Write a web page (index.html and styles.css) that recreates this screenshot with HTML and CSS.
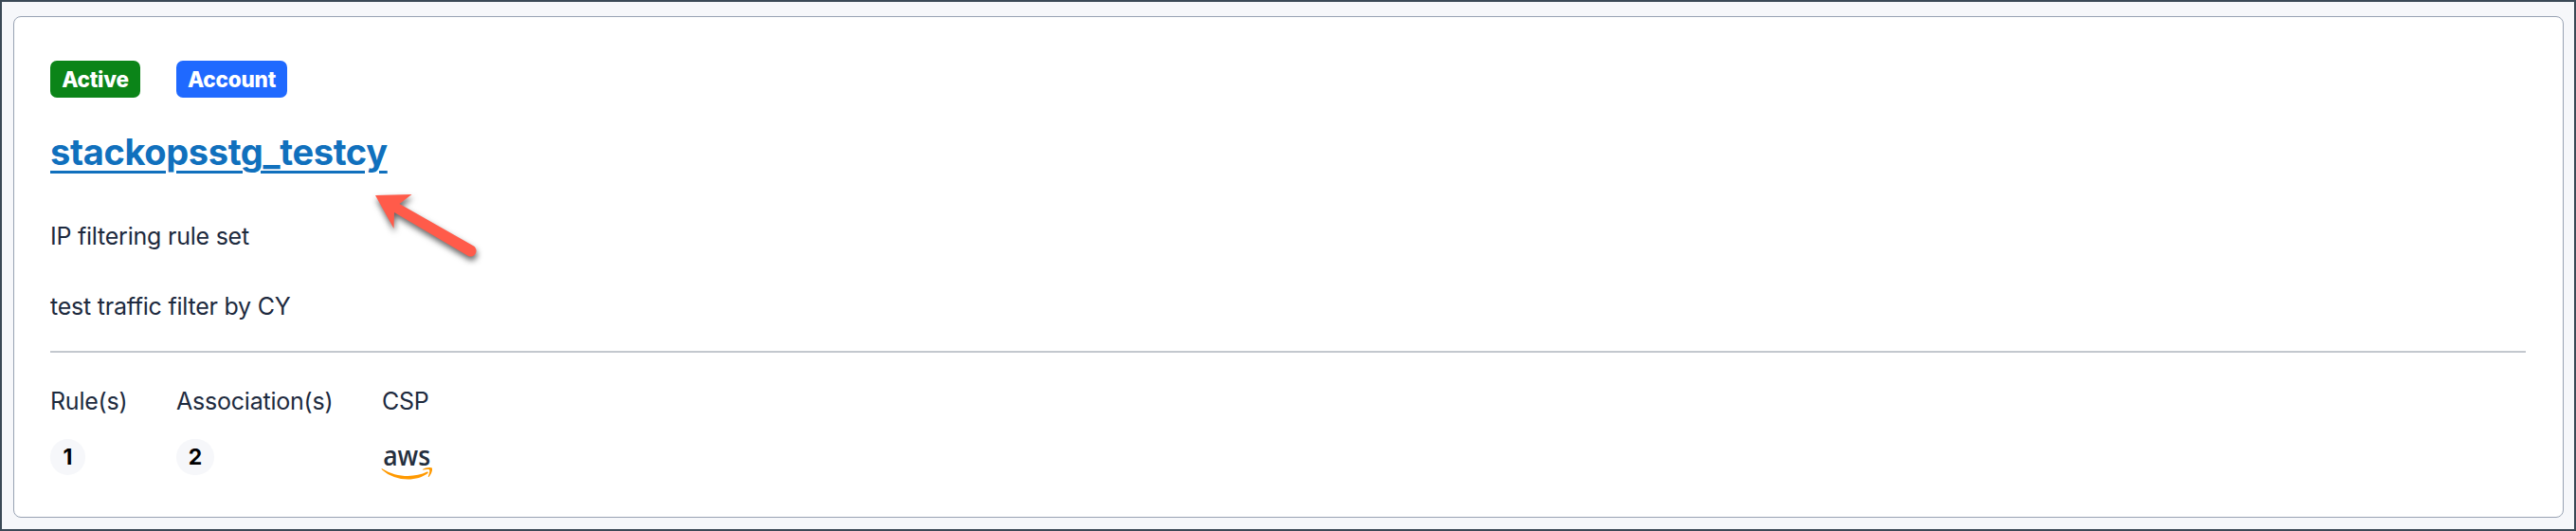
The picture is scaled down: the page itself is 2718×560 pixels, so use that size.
FILE: index.html
```html
<!DOCTYPE html>
<html lang="en">
<head>
<meta charset="utf-8">
<title>Traffic filters</title>
<link rel="stylesheet" href="styles.css">
</head>
<body>
<main class="page">
  <article class="card">
    <div class="badges">
      <span class="badge badge-active"><span class="badge-text">Active</span></span>
      <span class="badge badge-account"><span class="badge-text">Account</span></span>
    </div>
    <h2 class="title"><a class="link" href="#">stackopsstg_testcy</a></h2>
    <p class="text type">IP filtering rule set</p>
    <p class="text note">test traffic filter by CY</p>
    <hr class="rule">
    <div class="stats">
      <div class="stat stat-rules"><span class="label">Rule(s)</span><span class="count count-rules">1</span></div>
      <div class="stat stat-assoc"><span class="label">Association(s)</span><span class="count">2</span></div>
      <div class="stat stat-csp"><span class="label">CSP</span>
        <svg class="aws" viewBox="0 0 54 36" role="img" aria-label="aws">
          <text class="aws-text" x="1.2" y="19.5" textLength="50" lengthAdjust="spacingAndGlyphs">aws</text>
          <path fill="#ff9900" d="M.2 23.2C15 32.6 34 33.2 47.6 26.600c1-.4 1.700.6.9 1.300C36 37.600 13.500 36.500.2 24.400c-.9-.8-.8-1.700 0-1.200z"/>
          <path fill="#ff9900" d="M43 24.100c2-2 8.500-2.800 9.700-1.500 1.100 1.500-.5 6.800-3.200 9.300-.5.4-.9.100-.7-.4 1-2.400 2-6.200 1.300-7-.8-.9-4.300-.4-6.700 0-.6 0-.8-.1-.4-.4z"/>
        </svg>
      </div>
    </div>
  </article>
  <svg class="arrow" viewBox="0 0 130 90" aria-hidden="true">
    <path fill="#ff5b4a" d="M7 16 45.500 15 32.500 25 110 69A5.500 5.500 0 0 1 105 80L27 34 26.500 51z"/>
  </svg>
</main>
</body>
</html>
```

FILE: styles.css
```css
* { box-sizing: border-box; }
body { margin: 0; font-family: Inter, "Liberation Sans", sans-serif; color: #1d2a3e; }
.page { position: relative; height: 560px; padding: 15px 11px 12px 12px; background: #f6f7fa; border: 2px solid #3b4956; }
.card { height: 529px; padding: 46px 39px 0 38px; background: #fff; border: 1px solid #98a2b3; border-radius: 8px; }
.badges { display: flex; gap: 38px; }
.badge { display: flex; align-items: center; justify-content: center; height: 39px; border-radius: 7px; color: #fff; font-size: 22.5px; font-weight: 800; letter-spacing: -.2px; }
.badge-active { width: 95px; background: #0b8418; }
.badge-account { width: 117px; background: #1f69ff; }
.title { margin: 32px 0 0; font-size: 38px; line-height: 50px; font-weight: 700; letter-spacing: -.35px; }
.link { color: #1070bd; text-decoration: underline; text-decoration-thickness: 3px; text-underline-offset: 6px; }
.text { margin: 0; font-size: 25px; line-height: 38px; letter-spacing: -.23px; }
.type { margin-top: 45px; }
.note { margin-top: 36px; }
.rule { height: 2px; margin: 28px 0 0; border: 0; background: #c3c8ce; }
.stats { display: flex; margin-top: 32px; font-size: 25px; line-height: 38px; }
.stat { display: flex; flex-direction: column; align-items: flex-start; white-space: nowrap; }
.label { letter-spacing: -.22px; }
.stat-rules { width: 133px; }
.stat-assoc { width: 217px; }
.count { width: 40px; height: 38px; margin-top: 21px; border-radius: 20px; background: #f6f7fa; color: #000; font-size: 23px; font-weight: 700; text-align: center; }
.count-rules { width: 37px; }
.aws { width: 54px; height: 36px; margin-top: 29px; overflow: visible; }
.aws-text { font-family: "Open Sans", sans-serif; font-size: 29px; font-weight: 600; fill: #252f3e; }
.arrow { position: absolute; left: 387px; top: 188px; width: 130px; height: 90px; filter: drop-shadow(1px 4px 3px rgba(0, 0, 0, .6)); }
```
